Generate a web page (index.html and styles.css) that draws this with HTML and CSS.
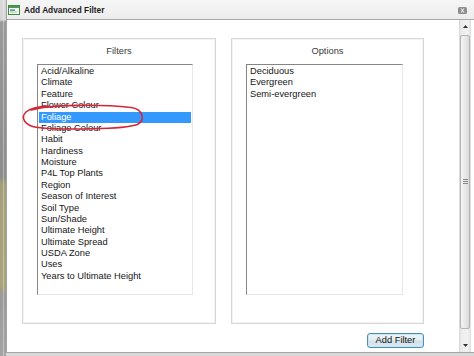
FILE: index.html
```html
<!DOCTYPE html>
<html lang="en">
<head>
<meta charset="utf-8">
<title>Add Advanced Filter</title>
<link rel="stylesheet" href="styles.css">
</head>
<body>
<div class="screen">
  <div class="strip"></div>
  <div class="dialog">
    <div class="titlebar">
      <svg class="app-icon" width="12" height="10" viewBox="0 0 12 10">
        <rect x="0.5" y="0.5" width="11" height="9" fill="#f4faf0" stroke="#3f8a45"/>
        <rect x="1" y="1" width="10" height="2" fill="#4f9a52"/>
        <rect x="2" y="4.5" width="5" height="1.2" fill="#2f6f8a"/>
        <rect x="2" y="6.5" width="7" height="1" fill="#9cc79c"/>
      </svg>
      <span class="title">Add Advanced Filter</span>
      <span class="close">
        <svg width="9" height="7" viewBox="0 0 9 7"><path d="M3 1.5 L6 5.5 M6 1.5 L3 5.5" stroke="#e8e8e8" stroke-width="1.1"/></svg>
      </span>
    </div>
    <div class="client">
      <div class="content">
        <div class="panels">
          <section class="panel">
            <h2 class="panel-title">Filters</h2>
            <ul class="listbox">
              <li>Acid/Alkaline</li>
              <li>Climate</li>
              <li>Feature</li>
              <li>Flower Colour</li>
              <li class="selected">Foliage</li>
              <li>Foliage Colour</li>
              <li>Habit</li>
              <li>Hardiness</li>
              <li>Moisture</li>
              <li>P4L Top Plants</li>
              <li>Region</li>
              <li>Season of Interest</li>
              <li>Soil Type</li>
              <li>Sun/Shade</li>
              <li>Ultimate Height</li>
              <li>Ultimate Spread</li>
              <li>USDA Zone</li>
              <li>Uses</li>
              <li>Years to Ultimate Height</li>
            </ul>
          </section>
          <section class="panel panel-right">
            <h2 class="panel-title">Options</h2>
            <ul class="listbox listbox-right">
              <li>Deciduous</li>
              <li>Evergreen</li>
              <li>Semi-evergreen</li>
            </ul>
          </section>
        </div>
        <div class="actions">
          <button class="btn">Add Filter</button>
        </div>
      </div>
      <div class="scrollbar">
        <div class="sb-btn"><svg width="5" height="3" viewBox="0 0 5 3"><path d="M0 3 L2.5 0 L5 3 Z" fill="#333"/></svg></div>
        <div class="sb-thumb"><span class="grip"></span></div>
        <div class="sb-rest"></div>
        <div class="sb-btn"><svg width="5" height="3" viewBox="0 0 5 3"><path d="M0 0 L2.5 3 L5 0 Z" fill="#333"/></svg></div>
      </div>
    </div>
  </div>
  <svg class="annotation" width="474" height="356" viewBox="0 0 474 356">
    <path d="M31 110 C 50 104.5, 100 104, 131 107.5 C 143 109, 145.5 120, 137.5 124.5 C 124 129.5, 62 130, 38 127.5 C 25 126, 20 118, 26 112 C 30 108.5, 38 106.5, 48 106" fill="none" stroke="#d52638" stroke-width="1.6" stroke-linecap="round"/>
  </svg>
</div>
</body>
</html>
```

FILE: styles.css
```css
* { box-sizing: border-box; }

html, body {
  margin: 0;
  padding: 0;
  background: #dcdcdc;
}

.screen {
  position: relative;
  width: 474px;
  height: 356px;
  display: flex;
  overflow: hidden;
  font-family: "Liberation Sans", Arial, sans-serif;
  background: #d9d9d9;
}

.strip {
  width: 6px;
  flex: none;
  background:
    linear-gradient(to right, rgba(255,255,255,0) 0, rgba(255,255,255,0) 3px, rgba(255,255,255,0.35) 3px, rgba(255,255,255,0.35) 4px, rgba(255,255,255,0) 4px),
    linear-gradient(to bottom, #dadada 0, #d4d4d4 20px, #9a9a9a 22px, #8c8c8c 175px, #a39f78 185px, #aaa47c 285px, #9a9a9a 295px, #a4a4a4 356px);
}

.dialog {
  width: 468px;
  height: 353px;
  flex: none;
  display: flex;
  flex-direction: column;
  background: #ffffff;
  border-left: 1px solid #a2a2a2;
  border-bottom: 1px solid #a6a6a6;
}

.titlebar {
  height: 20px;
  flex: none;
  display: flex;
  align-items: center;
  padding-left: 1px;
  padding-right: 7px;
  background: linear-gradient(to bottom, #f6f6f6, #ececec);
  border-bottom: 1px solid #a9a9a9;
}

.app-icon {
  display: block;
  margin-top: 1px;
}

.title {
  margin-left: 4px;
  font-size: 8.3px;
  font-weight: bold;
  color: #1c1c1c;
  line-height: 10px;
  margin-top: 1px;
}

.close {
  margin-left: auto;
  width: 9px;
  height: 7px;
  margin-top: 1px;
  border-radius: 1.5px;
  background: #8e8e8e;
  display: flex;
}

.client {
  flex: 1;
  display: flex;
  padding-right: 3px;
}

.content {
  width: 452px;
  flex: none;
  padding: 18px 0 0 15px;
}

.panels {
  display: flex;
  gap: 15px;
  width: 402px;
}

.panel {
  width: 194px;
  height: 286px;
  border: 1px solid #d6d6d6;
  box-shadow: inset 0 0 0 1px #f4f4f4;
  padding-top: 7px;
}

.panel-right {
  width: 193px;
}

.panel-title {
  margin: 0 0 7px 0;
  font-size: 9.3px;
  font-weight: normal;
  line-height: 11px;
  text-align: center;
  color: #3a3a3a;
}

.listbox {
  list-style: none;
  margin: 0 0 0 14px;
  padding: 1px;
  width: 156px;
  height: 231px;
  border-top: 1px solid #858585;
  border-left: 1px solid #858585;
  border-right: 1px solid #e6e6e6;
  border-bottom: 1px solid #e6e6e6;
  font-size: 9.3px;
  line-height: 11.37px;
  color: #161616;
}

.listbox-right {
  width: 157px;
}

.listbox li {
  padding-left: 2px;
  white-space: nowrap;
}

.listbox li.selected {
  background: #3399ff;
  color: #ffffff;
}

.actions {
  width: 402px;
  display: flex;
  justify-content: flex-end;
  margin-top: 9px;
}

.btn {
  width: 57px;
  height: 15px;
  padding: 0;
  font-family: "Liberation Sans", Arial, sans-serif;
  font-size: 9.3px;
  line-height: 13px;
  color: #111;
  border: 1px solid #4b8fae;
  border-radius: 3px;
  background: linear-gradient(to bottom, #eef5f8 0%, #e3edf2 48%, #d2e1e9 52%, #dbe8ef 100%);
  box-shadow: inset 0 0 0 1px #c6e6f4;
}

.scrollbar {
  width: 12px;
  flex: none;
  display: flex;
  flex-direction: column;
  background: linear-gradient(to right, #d4d4d4 0, #ececec 2px, #f2f2f2 9px, #dedede 12px);
}

.sb-btn {
  height: 13px;
  flex: none;
  display: flex;
  align-items: center;
  justify-content: center;
}

.sb-thumb {
  height: 294px;
  margin: 2px 1px 0 1px;
  flex: none;
  border: 1px solid #b4b4b4;
  border-radius: 2px;
  background: linear-gradient(to right, #f4f4f4, #e6e6e6 60%, #d9d9d9);
  display: flex;
  justify-content: center;
  padding-top: 143px;
}

.grip {
  width: 5px;
  height: 6px;
  background: repeating-linear-gradient(to bottom, #8a8a8a 0, #8a8a8a 1px, transparent 1px, transparent 2px);
}

.sb-rest {
  flex: 1;
}

.annotation {
  position: absolute;
  left: 0;
  top: 0;
  pointer-events: none;
}
```
